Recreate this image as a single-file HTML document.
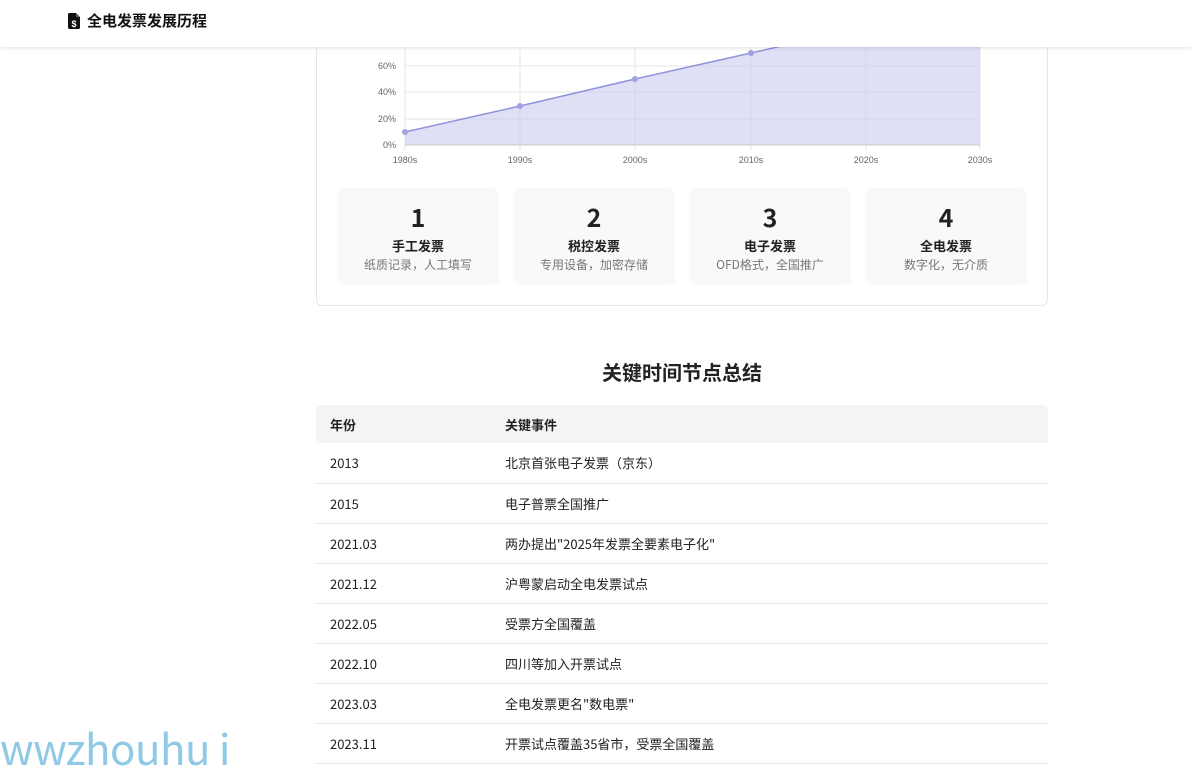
<!DOCTYPE html>
<html><head><meta charset="utf-8"><style>
*{margin:0;padding:0;box-sizing:border-box}
body{width:1192px;height:774px;overflow:hidden;background:#fff;font-family:"Noto Sans CJK SC","Liberation Sans",sans-serif;color:#222;position:relative}
.hdr{position:absolute;left:0;top:0;width:1192px;height:47px;background:#fff;box-shadow:0 1px 4px rgba(0,0,0,.12);z-index:5}
.hdr .t{position:absolute;left:87px;top:11px;font-size:15px;font-weight:bold;color:#111;line-height:20px}
.card{position:absolute;left:316px;top:-20px;width:732px;height:326px;border:1px solid #e5e7eb;border-radius:6px;background:#fff}
.stat{position:absolute;top:188px;width:162px;height:97px;background:#f8f9fb;border-radius:6px;text-align:center}
.stat .n{margin-top:14px;font-size:25px;font-weight:bold;color:#222;line-height:30px}
.stat .a{margin-top:5px;font-size:13px;font-weight:bold;color:#222;line-height:18px}
.stat .b{margin-top:1px;font-size:12px;color:#777;line-height:17px}
h2{position:absolute;left:316px;width:732px;top:358px;text-align:center;font-size:20px;font-weight:bold;color:#222;line-height:28px}
table{position:absolute;left:316px;top:405px;width:732px;border-collapse:collapse;font-size:13px}
th{background:#f3f4f6;height:38px;text-align:left;font-weight:bold;color:#222}
th:first-child{border-top-left-radius:6px}th:last-child{border-top-right-radius:6px}
td{height:40px;border-bottom:1px solid #e5e7eb;color:#222}
th:first-child,td:first-child{padding-left:14px;width:189px}
.wm{position:absolute;left:0;top:720px;font-size:42px;color:#8ec9e6;font-family:"Noto Sans CJK SC",sans-serif;letter-spacing:-0.5px;z-index:6;line-height:56px}
</style></head><body>
<div class="hdr">
<svg style="position:absolute;left:68px;top:13px" width="12" height="16" viewBox="0 0 12 16"><path d="M0 1.5Q0 0 1.5 0H8L12 4V14.5Q12 16 10.5 16H1.5Q0 16 0 14.5Z" fill="#111"/><path d="M8 0V4H12" fill="#666"/><text x="6" y="14" font-size="9" font-weight="bold" fill="#fff" text-anchor="middle" font-family="Liberation Sans">$</text></svg>
<div class="t">全电发票发展历程</div></div>
<div class="card"></div>
<svg style="position:absolute;left:0;top:0" width="1192" height="180">
<g stroke="#e6e6ea" stroke-width="1">
<line x1="405" y1="66" x2="980" y2="66"/><line x1="405" y1="92" x2="980" y2="92"/><line x1="405" y1="119" x2="980" y2="119"/><line x1="405" y1="40" x2="980" y2="40"/>
<line x1="405" y1="30" x2="405" y2="150"/><line x1="520" y1="30" x2="520" y2="150"/><line x1="635" y1="30" x2="635" y2="150"/><line x1="751" y1="30" x2="751" y2="150"/><line x1="866" y1="30" x2="866" y2="150"/><line x1="980" y1="30" x2="980" y2="150"/>
</g>
<path d="M405 132L520 106L635 79L751 53L866 27L980 0L980 145L405 145Z" fill="#c9c9ee" fill-opacity=".6"/>
<path d="M405 132L520 106L635 79L751 53L866 27L980 0" fill="none" stroke="#8f92dd" stroke-width="1.5"/>
<line x1="405" y1="145" x2="980" y2="145" stroke="#ccc"/>
<g fill="#9fa2e3"><circle cx="405" cy="132" r="3"/><circle cx="520" cy="106" r="3"/><circle cx="635" cy="79" r="3"/><circle cx="751" cy="53" r="3"/></g>
<g font-size="9" fill="#666" font-family="Liberation Sans" text-anchor="end">
<text x="396" y="69">60%</text><text x="396" y="95">40%</text><text x="396" y="122">20%</text><text x="396" y="148">0%</text></g>
<g font-size="9" fill="#666" font-family="Liberation Sans" text-anchor="middle">
<text x="405" y="163">1980s</text><text x="520" y="163">1990s</text><text x="635" y="163">2000s</text><text x="751" y="163">2010s</text><text x="866" y="163">2020s</text><text x="980" y="163">2030s</text></g>
</svg>
<div class="stat" style="left:337px"><div class="n">1</div><div class="a">手工发票</div><div class="b">纸质记录，人工填写</div></div>
<div class="stat" style="left:513px"><div class="n">2</div><div class="a">税控发票</div><div class="b">专用设备，加密存储</div></div>
<div class="stat" style="left:689px"><div class="n">3</div><div class="a">电子发票</div><div class="b">OFD格式，全国推广</div></div>
<div class="stat" style="left:865px"><div class="n">4</div><div class="a">全电发票</div><div class="b">数字化，无介质</div></div>
<h2>关键时间节点总结</h2>
<table>
<tr><th>年份</th><th>关键事件</th></tr>
<tr><td>2013</td><td>北京首张电子发票（京东）</td></tr>
<tr><td>2015</td><td>电子普票全国推广</td></tr>
<tr><td>2021.03</td><td>两办提出"2025年发票全要素电子化"</td></tr>
<tr><td>2021.12</td><td>沪粤蒙启动全电发票试点</td></tr>
<tr><td>2022.05</td><td>受票方全国覆盖</td></tr>
<tr><td>2022.10</td><td>四川等加入开票试点</td></tr>
<tr><td>2023.03</td><td>全电发票更名"数电票"</td></tr>
<tr><td>2023.11</td><td>开票试点覆盖35省市，受票全国覆盖</td></tr>
</table>
<div class="wm">wwzhouhu i</div>
</body></html>
